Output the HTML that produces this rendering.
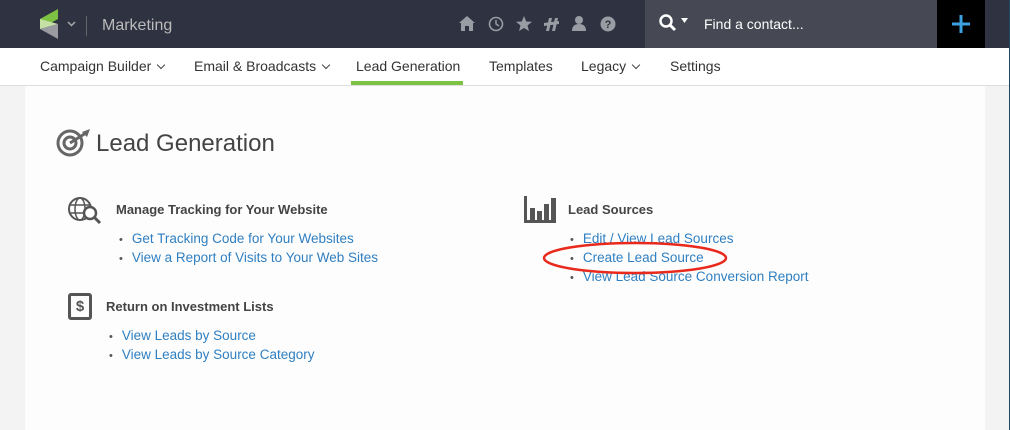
<!DOCTYPE html>
<html><head><style>
*{margin:0;padding:0;box-sizing:border-box}
body{width:1010px;height:430px;overflow:hidden;background:#f3f3f3;font-family:"Liberation Sans",sans-serif;position:relative}
.top{position:absolute;left:0;top:0;width:1010px;height:48px;background:#2f3241}
.search{position:absolute;left:645px;top:0;width:292px;height:48px;background:#464854}
.plus{position:absolute;left:937px;top:0;width:48px;height:48px;background:#000}
.nav{position:absolute;left:0;top:48px;width:1009px;height:38px;background:#fff;border-bottom:1px solid #ddd}
.nav span{position:absolute;top:10px;font-size:14px;color:#333}
.main{position:absolute;left:25px;top:86px;width:960px;height:344px;background:#fdfdfd}
.edge{position:absolute;left:1009px;top:0;width:1px;height:430px;background:#1b4a66}
.t{position:absolute;color:#444}
a{color:#2f7fc1;text-decoration:none}
ul{position:absolute;list-style:none;font-size:13.5px}
li{height:19px;line-height:19px}
li:before{content:"•";color:#555;margin-right:9px;font-size:11px}
h3{position:absolute;font-size:13px;font-weight:bold;color:#444}
.chev{display:inline-block;width:6px;height:6px;border-right:1.5px solid #444;border-bottom:1.5px solid #444;transform:rotate(45deg);margin-left:7px;position:relative;top:-3px}
</style></head><body>
<div class="top">
 <svg style="position:absolute;left:40px;top:9px" width="19" height="30"><polygon points="0,10 18,0 18,10 0,20" fill="#7dc242"/><polygon points="0,10 18,15 0,20" fill="#c5e0a5"/><polygon points="0,20 18,15 18,30 0,20" fill="#9a9ba0"/></svg>
 <svg style="position:absolute;left:67px;top:21px" width="9" height="6"><polyline points="1,1 4.5,4.5 8,1" fill="none" stroke="#aaa" stroke-width="1.5"/></svg>
 <div style="position:absolute;left:86px;top:16px;width:1px;height:20px;background:#666"></div>
 <span style="position:absolute;left:102px;top:17px;color:#bbb;font-size:16px">Marketing</span>
 <svg style="position:absolute;left:458px;top:15px" width="160" height="18" fill="#9a9ca4" stroke="#9a9ca4">
  <polygon points="1,8 9,1 17,8 15,8 15,16 11,16 11,11 7,11 7,16 3,16 3,8" stroke="none"/>
  <circle cx="38" cy="9" r="6.5" fill="none" stroke-width="1.6"/><polyline points="38,5 38,9 41,11" fill="none" stroke-width="1.5"/>
  <polygon points="66,1 68.2,6.5 74,6.8 69.5,10.5 71,16 66,13 61,16 62.5,10.5 58,6.8 63.8,6.5" stroke="none"/>
  <path d="M88 16 L91 3 L94 3 L91 16Z M94 16 L97 3 L100 3 L97 16Z M86 8 L101 6 L101 9 L86 11Z" stroke="none"/>
  <circle cx="121" cy="5" r="4" stroke="none"/><path d="M114 16 Q114 9 121 9 Q128 9 128 16Z" stroke="none"/>
  <circle cx="150" cy="9" r="7.5" stroke="none"/><text x="150" y="13" font-size="11" font-weight="bold" fill="#2f3241" stroke="none" text-anchor="middle" font-family="Liberation Sans">?</text>
 </svg>
</div>
<div class="search">
 <svg style="position:absolute;left:14px;top:14px" width="32" height="18"><circle cx="7" cy="7" r="5.5" fill="none" stroke="#fff" stroke-width="2.5"/><line x1="11" y1="11" x2="16" y2="16" stroke="#fff" stroke-width="3"/><polygon points="22,4 29,4 25.5,9" fill="#fff"/></svg>
 <span style="position:absolute;left:59px;top:16px;color:#fff;font-size:14px">Find a contact...</span></div>
<div class="plus"><svg style="position:absolute;left:15px;top:15px" width="18" height="18"><rect x="7.5" y="0" width="3" height="18" fill="#3b9fe0"/><rect x="0" y="7.5" width="18" height="3" fill="#3b9fe0"/></svg></div>
<div class="nav">
 <span style="left:40px">Campaign Builder<i class="chev"></i></span>
 <span style="left:194px">Email &amp; Broadcasts<i class="chev"></i></span>
 <span style="left:356px">Lead Generation</span>
 <span style="left:489px">Templates</span>
 <span style="left:581px">Legacy<i class="chev"></i></span>
 <span style="left:670px">Settings</span>
 <div style="position:absolute;left:351px;top:33px;width:112px;height:4px;background:#7dc242"></div>
</div>
<div class="main"></div>
<div class="edge"></div>
<svg style="position:absolute;left:56px;top:128px" width="36" height="30"><circle cx="14" cy="15" r="12" fill="none" stroke="#666" stroke-width="3"/><circle cx="14" cy="15" r="6" fill="none" stroke="#666" stroke-width="3"/><line x1="14" y1="15" x2="30" y2="5" stroke="#666" stroke-width="3"/><polygon points="26,4 34,1 31,9" fill="#666"/></svg>
<div class="t" style="left:96px;top:130px;font-size:24px">Lead Generation</div>
<svg style="position:absolute;left:68px;top:196px" width="34" height="28"><circle cx="12" cy="13" r="11" fill="none" stroke="#555" stroke-width="2"/><ellipse cx="12" cy="13" rx="5" ry="11" fill="none" stroke="#555" stroke-width="1.5"/><line x1="1" y1="9" x2="23" y2="9" stroke="#555" stroke-width="1.5"/><line x1="1" y1="17" x2="23" y2="17" stroke="#555" stroke-width="1.5"/><circle cx="22" cy="17" r="6" fill="#fff" stroke="#555" stroke-width="2.5"/><line x1="26" y1="21" x2="32" y2="27" stroke="#555" stroke-width="3"/></svg>
<h3 style="left:116px;top:202px">Manage Tracking for Your Website</h3>
<ul style="left:119px;top:229px"><li><a>Get Tracking Code for Your Websites</a></li><li><a>View a Report of Visits to Your Web Sites</a></li></ul>
<div style="position:absolute;left:68px;top:293px;width:24px;height:27px;border:3px solid #555;border-radius:3px;color:#555;font-weight:bold;font-size:15px;text-align:center;line-height:21px">$</div>
<h3 style="left:106px;top:299px">Return on Investment Lists</h3>
<ul style="left:109px;top:326px"><li><a>View Leads by Source</a></li><li><a>View Leads by Source Category</a></li></ul>
<svg style="position:absolute;left:524px;top:196px" width="32" height="27"><rect x="0" y="0" width="3" height="27" fill="#555"/><rect x="0" y="24" width="32" height="3" fill="#555"/><rect x="6" y="12" width="5" height="13" fill="#555"/><rect x="13" y="15" width="5" height="10" fill="#555"/><rect x="20" y="8" width="5" height="17" fill="#555"/><rect x="27" y="2" width="5" height="23" fill="#555"/></svg>
<h3 style="left:568px;top:202px">Lead Sources</h3>
<ul style="left:570px;top:229px"><li><a>Edit / View Lead Sources</a></li><li><a>Create Lead Source</a></li><li><a>View Lead Source Conversion Report</a></li></ul>
<svg style="position:absolute;left:540px;top:238px" width="190" height="40"><ellipse cx="95" cy="20" rx="91" ry="15" fill="none" stroke="#e8291c" stroke-width="2.5"/></svg>
</body></html>
